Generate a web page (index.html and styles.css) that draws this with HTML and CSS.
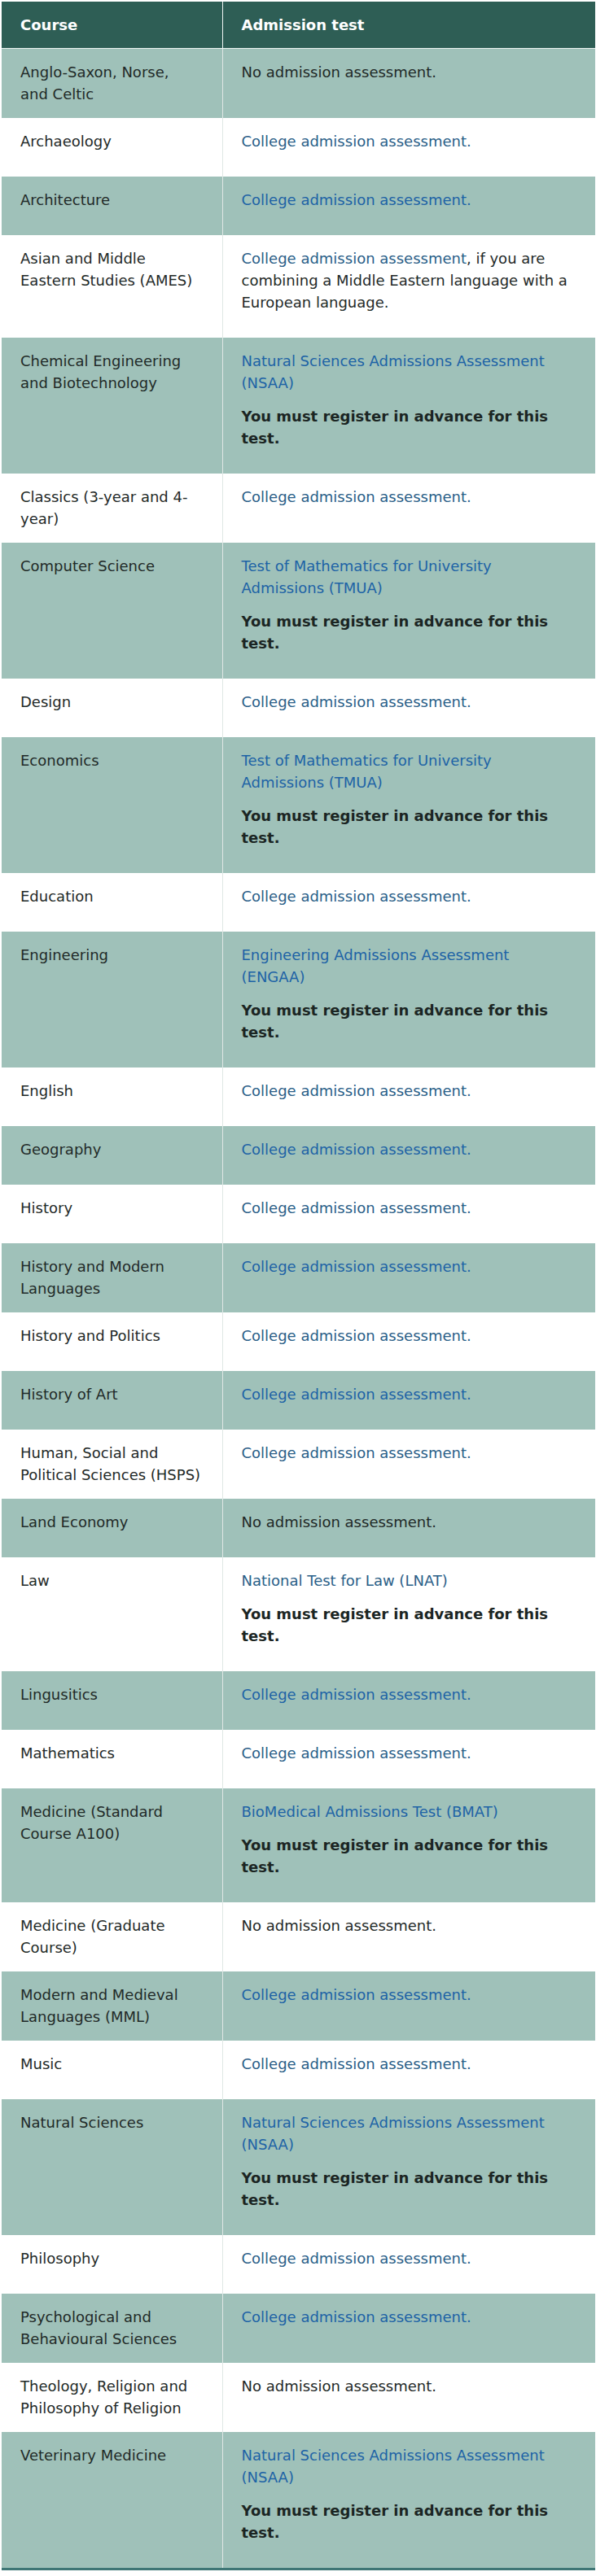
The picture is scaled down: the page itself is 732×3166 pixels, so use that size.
FILE: index.html
```html
<!DOCTYPE html>
<html lang="en">
<head>
<meta charset="utf-8">
<title>Admission tests</title>
<link rel="stylesheet" href="styles.css">
</head>
<body>
<table class="tests">
  <thead>
    <tr><th class="course">Course</th><th>Admission test</th></tr>
  </thead>
  <tbody>
    <tr><td class="course">Anglo-Saxon, Norse,<br>and Celtic</td><td><p>No admission assessment.</p></td></tr>
    <tr><td class="course">Archaeology</td><td><p><a href="#">College admission assessment.</a></p></td></tr>
    <tr><td class="course">Architecture</td><td><p><a href="#">College admission assessment.</a></p></td></tr>
    <tr><td class="course">Asian and Middle Eastern Studies (AMES)</td><td><p><a href="#">College admission assessment</a>, if you are combining a Middle Eastern language with a European language.</p></td></tr>
    <tr><td class="course">Chemical Engineering and Biotechnology</td><td><p><a href="#">Natural Sciences Admissions Assessment (NSAA)</a></p><p><strong>You must register in advance for this test.</strong></p></td></tr>
    <tr><td class="course">Classics (3-year and 4-year)</td><td><p><a href="#">College admission assessment.</a></p></td></tr>
    <tr><td class="course">Computer Science</td><td><p><a href="#">Test of Mathematics for University Admissions (TMUA)</a></p><p><strong>You must register in advance for this test.</strong></p></td></tr>
    <tr><td class="course">Design</td><td><p><a href="#">College admission assessment.</a></p></td></tr>
    <tr><td class="course">Economics</td><td><p><a href="#">Test of Mathematics for University Admissions (TMUA)</a></p><p><strong>You must register in advance for this test.</strong></p></td></tr>
    <tr><td class="course">Education</td><td><p><a href="#">College admission assessment.</a></p></td></tr>
    <tr><td class="course">Engineering</td><td><p><a href="#">Engineering Admissions Assessment (ENGAA)</a></p><p><strong>You must register in advance for this test.</strong></p></td></tr>
    <tr><td class="course">English</td><td><p><a href="#">College admission assessment.</a></p></td></tr>
    <tr><td class="course">Geography</td><td><p><a href="#">College admission assessment.</a></p></td></tr>
    <tr><td class="course">History</td><td><p><a href="#">College admission assessment.</a></p></td></tr>
    <tr><td class="course">History and Modern Languages</td><td><p><a href="#">College admission assessment.</a></p></td></tr>
    <tr><td class="course">History and Politics</td><td><p><a href="#">College admission assessment.</a></p></td></tr>
    <tr><td class="course">History of Art</td><td><p><a href="#">College admission assessment.</a></p></td></tr>
    <tr><td class="course">Human, Social and Political Sciences (HSPS)</td><td><p><a href="#">College admission assessment.</a></p></td></tr>
    <tr><td class="course">Land Economy</td><td><p>No admission assessment.</p></td></tr>
    <tr><td class="course">Law</td><td><p><a href="#">National Test for Law (LNAT)</a></p><p><strong>You must register in advance for this test.</strong></p></td></tr>
    <tr><td class="course">Lingusitics</td><td><p><a href="#">College admission assessment.</a></p></td></tr>
    <tr><td class="course">Mathematics</td><td><p><a href="#">College admission assessment.</a></p></td></tr>
    <tr><td class="course">Medicine (Standard Course A100)</td><td><p><a href="#">BioMedical Admissions Test (BMAT)</a></p><p><strong>You must register in advance for this test.</strong></p></td></tr>
    <tr><td class="course">Medicine (Graduate Course)</td><td><p>No admission assessment.</p></td></tr>
    <tr><td class="course">Modern and Medieval Languages (MML)</td><td><p><a href="#">College admission assessment.</a></p></td></tr>
    <tr><td class="course">Music</td><td><p><a href="#">College admission assessment.</a></p></td></tr>
    <tr><td class="course">Natural Sciences</td><td><p><a href="#">Natural Sciences Admissions Assessment (NSAA)</a></p><p><strong>You must register in advance for this test.</strong></p></td></tr>
    <tr><td class="course">Philosophy</td><td><p><a href="#">College admission assessment.</a></p></td></tr>
    <tr><td class="course">Psychological and Behavioural Sciences</td><td><p><a href="#">College admission assessment.</a></p></td></tr>
    <tr><td class="course">Theology, Religion and Philosophy of Religion</td><td><p>No admission assessment.</p></td></tr>
    <tr><td class="course">Veterinary Medicine</td><td><p><a href="#">Natural Sciences Admissions Assessment (NSAA)</a></p><p><strong>You must register in advance for this test.</strong></p></td></tr>
  </tbody>
</table>
</body>
</html>
```

FILE: styles.css
```css
html, body {
  margin: 0;
  padding: 0;
  background: #ffffff;
}

body {
  padding: 2px 1px 0 2px;
  font-family: "DejaVu Sans", Verdana, sans-serif;
  font-size: 18px;
  line-height: 27px;
  color: #1f2a28;
}

.tests {
  width: 729px;
  border-collapse: collapse;
  table-layout: fixed;
  border-bottom: 3px solid #3e7675;
}

.tests th,
.tests td {
  box-sizing: border-box;
  text-align: left;
  vertical-align: top;
  padding: 15px 23px 16px;
}

.tests th {
  background: #2e5e55;
  color: #ffffff;
  font-weight: bold;
  padding: 15px 23px 15px;
  border-bottom: 1px solid #eef4f2;
}

.tests .course {
  width: 271px;
  border-right: 1px solid #dfe7e5;
}

.tests th.course {
  border-right-color: #eef4f2;
}

.tests tbody tr:nth-child(odd) td {
  background: #9fc1b9;
}

.tests tbody tr:nth-child(even) td {
  background: #ffffff;
}

.tests p {
  margin: 0 0 14px;
}

.tests a {
  text-decoration: none;
}

.tests tbody tr:nth-child(odd) a {
  color: #1d63a6;
}

.tests tbody tr:nth-child(even) a {
  color: #2a6088;
}

.tests strong {
  font-weight: bold;
  color: #1b2523;
}
```
